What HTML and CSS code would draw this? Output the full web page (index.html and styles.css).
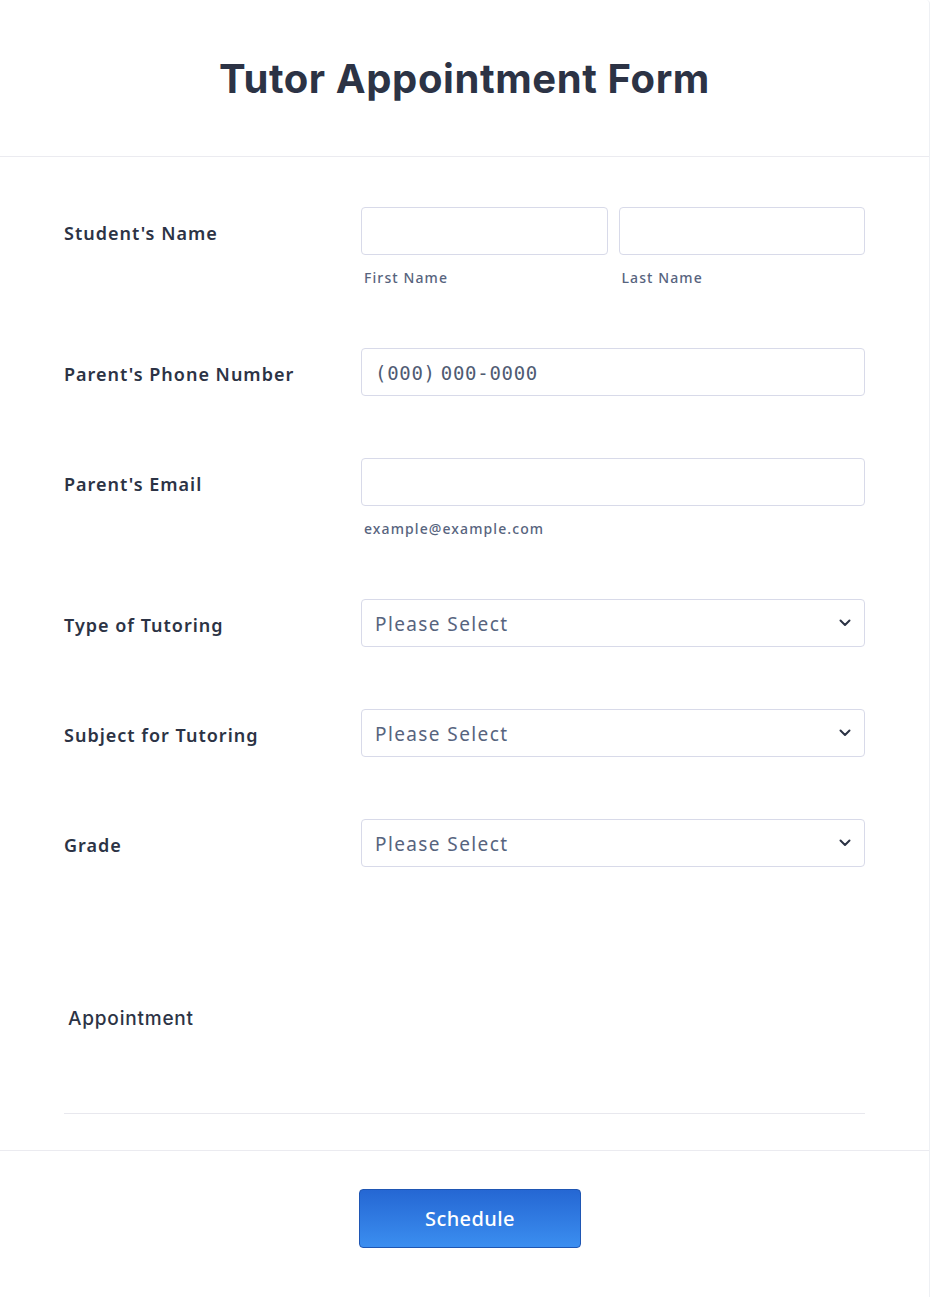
FILE: index.html
```html
<!DOCTYPE html>
<html lang="en">
<head>
<meta charset="utf-8">
<title>Tutor Appointment Form</title>
<link rel="stylesheet" href="styles.css">
</head>
<body>
<div class="card">
  <header class="header">
    <h1 class="title">Tutor Appointment Form</h1>
  </header>
  <form class="body">
    <div class="row">
      <label class="label">Student's Name</label>
      <div class="field">
        <div class="pair">
          <div class="col">
            <div class="input"></div>
            <div class="sublabel">First Name</div>
          </div>
          <div class="col">
            <div class="input"></div>
            <div class="sublabel">Last Name</div>
          </div>
        </div>
      </div>
    </div>
    <div class="row">
      <label class="label">Parent's Phone Number</label>
      <div class="field">
        <div class="input"><span class="mono">(000) 000-0000</span></div>
      </div>
    </div>
    <div class="row">
      <label class="label">Parent's Email</label>
      <div class="field">
        <div class="input"></div>
        <div class="sublabel">example@example.com</div>
      </div>
    </div>
    <div class="row">
      <label class="label">Type of Tutoring</label>
      <div class="field">
        <div class="input select"><span class="ph">Please Select</span>
          <svg class="chev" width="12" height="8" viewBox="0 0 12 8"><path d="M1.5 1.5 L6 6 L10.5 1.5" fill="none" stroke="#2c3345" stroke-width="2" stroke-linecap="round" stroke-linejoin="round"/></svg>
        </div>
      </div>
    </div>
    <div class="row">
      <label class="label">Subject for Tutoring</label>
      <div class="field">
        <div class="input select"><span class="ph">Please Select</span>
          <svg class="chev" width="12" height="8" viewBox="0 0 12 8"><path d="M1.5 1.5 L6 6 L10.5 1.5" fill="none" stroke="#2c3345" stroke-width="2" stroke-linecap="round" stroke-linejoin="round"/></svg>
        </div>
      </div>
    </div>
    <div class="row">
      <label class="label">Grade</label>
      <div class="field">
        <div class="input select"><span class="ph">Please Select</span>
          <svg class="chev" width="12" height="8" viewBox="0 0 12 8"><path d="M1.5 1.5 L6 6 L10.5 1.5" fill="none" stroke="#2c3345" stroke-width="2" stroke-linecap="round" stroke-linejoin="round"/></svg>
        </div>
      </div>
    </div>
    <div class="appointment">
      <div class="appt-label">Appointment</div>
    </div>
  </form>
  <footer class="footer">
    <button class="button" type="button">Schedule</button>
  </footer>
</div>
</body>
</html>
```

FILE: styles.css
```css
html, body {
  margin: 0;
  padding: 0;
  background: #ffffff;
}
.card {
  width: 929px;
  min-height: 1297px;
  border-right: 1px solid #eef0f4;
  border-top-right-radius: 4px;
  background: #fff;
  font-family: "Noto Sans", "Open Sans", sans-serif;
  color: #2c3345;
}
.header {
  height: 156px;
  border-bottom: 1px solid #ebebf0;
  display: flex;
  align-items: center;
  justify-content: center;
}
.title {
  margin: 0;
  font-family: Inter, "Noto Sans", sans-serif;
  font-weight: 700;
  font-size: 40px;
  letter-spacing: 0.6px;
  color: #2c3345;
}
.body {
  padding: 50px 64px 0 64px;
  display: flex;
  flex-direction: column;
}
.row {
  display: grid;
  grid-template-columns: 297px 504px;
  margin-bottom: 62px;
}
.label {
  font-size: 18px;
  font-weight: 600;
  letter-spacing: 1px;
  line-height: 24px;
  padding-top: 14px;
  color: #2c3345;
}
.pair {
  display: grid;
  grid-template-columns: 1fr 1fr;
  gap: 11px;
}
.input {
  height: 48px;
  box-sizing: border-box;
  border: 1px solid #d8dae9;
  border-radius: 4px;
  background: #fff;
  display: flex;
  align-items: center;
  padding: 0 14px 0 13px;
}
.select {
  justify-content: space-between;
}
.ph {
  font-size: 19px;
  letter-spacing: 1.4px;
  color: #57647e;
  padding-top: 1px;
}
.mono {
  font-family: "DejaVu Sans Mono", monospace;
  font-size: 19px;
  font-weight: 400;
  letter-spacing: 0.7px;
  word-spacing: -7px;
  color: #4f5b73;
  padding-top: 1px;
}
.chev {
  margin-right: -1px;
}
.sublabel {
  margin-top: 14px;
  padding-left: 3px;
  font-size: 14px;
  line-height: 17px;
  letter-spacing: 1.1px;
  font-weight: 500;
  color: #57647e;
}
.appointment {
  height: 185px;
  border-bottom: 1px solid #e8e8ee;
  box-sizing: border-box;
  padding-top: 78px;
}
.appt-label {
  padding-left: 4px;
  font-family: Inter, "Noto Sans", sans-serif;
  font-size: 19px;
  font-weight: 500;
  letter-spacing: 0.8px;
  line-height: 24px;
  color: #2c3345;
}
.footer {
  margin-top: 36px;
  border-top: 1px solid #ebebf0;
  display: flex;
  justify-content: center;
  padding-top: 38px;
}
.button {
  width: 222px;
  height: 59px;
  margin-left: 11px;
  border: 1px solid #1f56b3;
  border-radius: 4px;
  background: linear-gradient(to bottom, #2567d3, #3b8ef0);
  color: #ffffff;
  font-family: "Noto Sans", sans-serif;
  font-size: 20px;
  font-weight: 500;
  letter-spacing: 0.4px;
  cursor: pointer;
}
```
